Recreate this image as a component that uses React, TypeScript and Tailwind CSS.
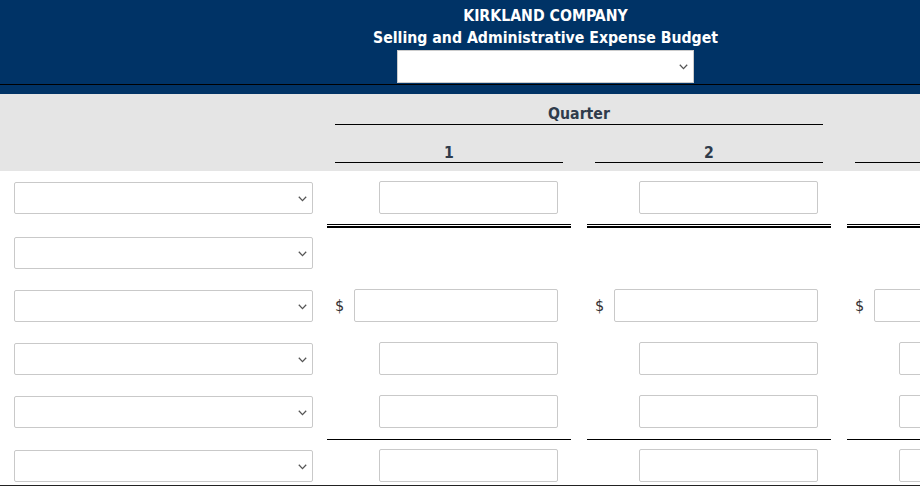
import React from 'react';

const Chevron = () => (
  <svg width="9" height="6" viewBox="0 0 9 6" className="absolute right-[5px] top-[13px]">
    <polyline points="0.8,0.8 4.5,4.6 8.2,0.8" fill="none" stroke="#555" strokeWidth="1.3" />
  </svg>
);

function Dropdown() {
  return (
    <div className="relative w-full h-[32px] border border-[#c9c9c9] rounded-[2px] bg-white">
      <Chevron />
    </div>
  );
}

function Box({ dollar }: { dollar?: boolean }) {
  if (dollar) {
    return (
      <div className="flex items-center pl-[16px]">
        <span className="w-[19px] text-[16px] leading-[32px] text-[#333]">$</span>
        <div className="w-[204px] h-[33px] border border-[#c9c9c9] rounded-[2px] bg-white" />
      </div>
    );
  }
  return (
    <div className="pl-[60px]">
      <div className="w-[179px] h-[33px] border border-[#c9c9c9] rounded-[2px] bg-white" />
    </div>
  );
}

type Cell = 'none' | 'box' | 'dollar';
type Row = { cells: Cell[]; line?: 'double' | 'single'; h: number; pt: number };

const rows: Row[] = [
  { cells: ['box', 'box', 'none'], line: 'double', h: 60, pt: 11 },
  { cells: ['none', 'none', 'none'], h: 53, pt: 6 },
  { cells: ['dollar', 'dollar', 'dollar'], h: 53, pt: 6 },
  { cells: ['box', 'box', 'box'], h: 53, pt: 6 },
  { cells: ['box', 'box', 'box'], h: 49, pt: 6 },
  { cells: ['box', 'box', 'box'], line: 'single', h: 60, pt: 10 },
];

export default function App() {
  return (
    <div
      className="w-[920px] h-[486px] overflow-hidden bg-white border-b border-[#222]"
      style={{ fontFamily: '"DejaVu Sans Condensed", "DejaVu Sans", sans-serif' }}
    >
      <div className="w-[1091px]">
        {/* title band */}
        <div className="bg-[#003366] h-[94px]">
          <div className="flex flex-col items-center pt-[5px] text-white font-bold text-[15.7px] leading-[22px]">
            <div>KIRKLAND COMPANY</div>
            <div>Selling and Administrative Expense Budget</div>
            <div className="relative mt-[1px] w-[297px] h-[33px] bg-white border border-[#ccc]">
              <Chevron />
            </div>
          </div>
          <div className="mt-[1px] border-t border-black" />
        </div>

        {/* column heads */}
        <div className="bg-[#e5e5e5] h-[77px] pt-[10px] grid content-start grid-cols-[319px_260px_260px_252px] text-[#2f3b4b] font-bold text-[15.7px]">
          <div />
          <div className="col-span-2 mx-4 border-b border-black text-center leading-[20px]">Quarter</div>
          <div />
          <div />
          <div className="mx-4 mt-[18px] border-b border-black text-center leading-[19px]">1</div>
          <div className="mx-4 mt-[18px] border-b border-black text-center leading-[19px]">2</div>
          <div className="mx-4 mt-[18px] border-b border-black text-center leading-[19px]">&nbsp;</div>
        </div>

        {/* body */}
        {rows.map((r, i) => (
          <div key={i} className="grid grid-cols-[319px_260px_260px_252px]" style={{ height: r.h }}>
            <div className="flex flex-col pl-[14px] pr-[6px]">
              {r.line === 'single' && <div className="h-[1px]" />}
              <div style={{ paddingTop: r.pt }}>
                <Dropdown />
              </div>
            </div>
            {r.cells.map((c, j) => (
              <div key={j} className="flex flex-col">
                {r.line === 'single' && <div className="mx-2 border-t border-black" />}
                <div className="h-[33px] box-content" style={{ paddingTop: r.pt - 1 }}>
                  {c !== 'none' && <Box dollar={c === 'dollar'} />}
                </div>
                {r.line === 'double' && (
                  <div className="mx-2 mt-[10px]">
                    <div className="border-t border-black" />
                    <div className="mt-[1px] h-[2px] bg-black" />
                  </div>
                )}
              </div>
            ))}
          </div>
        ))}
      </div>
    </div>
  );
}
